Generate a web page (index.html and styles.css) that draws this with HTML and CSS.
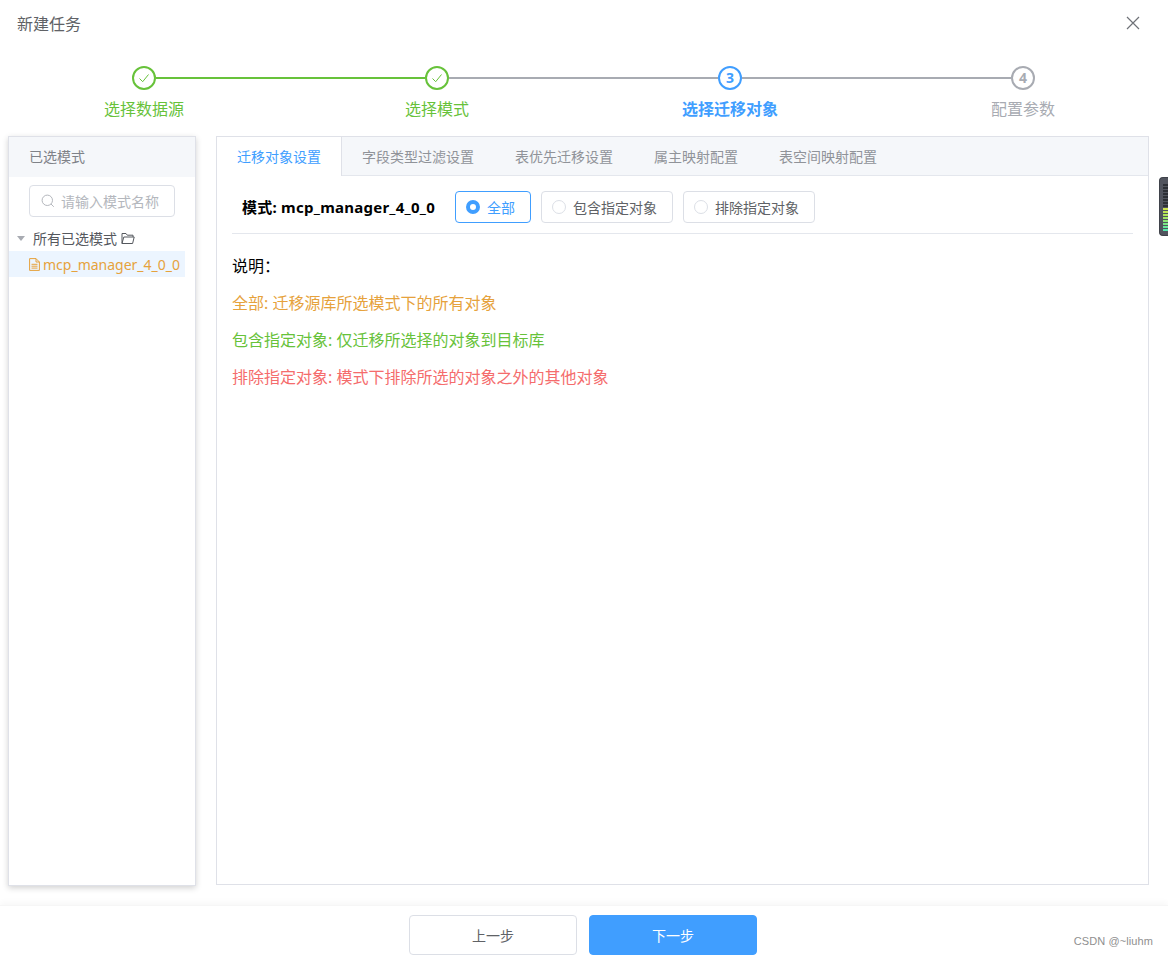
FILE: index.html
```html
<!DOCTYPE html>
<html lang="zh-CN">
<head>
  <meta charset="UTF-8">
  <meta name="viewport" content="width=device-width, initial-scale=1">
  <title>新建任务</title>
  <link rel="stylesheet" href="styles.css">
</head>
<body>
  <div class="dialog">
    <div class="dialog-head">
      <span class="dialog-title">新建任务</span>
      <svg class="close-icon" width="14" height="14" viewBox="0 0 14 14"><path d="M1 1L13 13M13 1L1 13" stroke="#6f7278" stroke-width="1.2" fill="none"/></svg>
    </div>

    <div class="steps">
      <div class="step done line-done">
        <div class="step-icon"><svg width="12" height="12" viewBox="0 0 12 12"><path d="M1.5 6.5L4.7 9.7L10.5 2.5" stroke="#67c23a" stroke-width="1" fill="none"/></svg></div>
        <div class="step-label">选择数据源</div>
      </div>
      <div class="step done">
        <div class="step-icon"><svg width="12" height="12" viewBox="0 0 12 12"><path d="M1.5 6.5L4.7 9.7L10.5 2.5" stroke="#67c23a" stroke-width="1" fill="none"/></svg></div>
        <div class="step-label">选择模式</div>
      </div>
      <div class="step active">
        <div class="step-icon">3</div>
        <div class="step-label">选择迁移对象</div>
      </div>
      <div class="step last">
        <div class="step-icon">4</div>
        <div class="step-label">配置参数</div>
      </div>
    </div>

    <div class="content">
      <div class="side">
        <div class="side-head">已选模式</div>
        <div class="search">
          <svg width="14" height="14" viewBox="0 0 14 14"><circle cx="6.3" cy="6.3" r="5.2" stroke="#b4b7bd" stroke-width="1" fill="none"/><path d="M10 10L12.8 12.8" stroke="#b4b7bd" stroke-width="1"/></svg>
          <span>请输入模式名称</span>
        </div>
        <div class="tree-root">
          <span class="caret"></span>
          <span>所有已选模式</span>
          <svg width="14" height="13" viewBox="0 0 14 13"><path d="M1 11.5V1.5H5L6.3 3.2H12V5M1 11.5H11.6L13.2 5H2.8L1 11.5Z" stroke="#55585e" stroke-width="1" fill="none"/></svg>
        </div>
        <div class="tree-item">
          <svg width="11" height="13" viewBox="0 0 11 13"><path d="M0.6 0.6H7L10.4 4V12.4H0.6ZM7 0.6V4H10.4M2.5 6.3H8.5M2.5 8.2H8.5M2.5 10.1H8.5" stroke="#e6a23c" stroke-width="1" fill="none"/></svg>
          <span>mcp_manager_4_0_0</span>
        </div>
      </div>

      <div class="main">
        <div class="tabs">
          <div class="tab current">迁移对象设置</div>
          <div class="tab">字段类型过滤设置</div>
          <div class="tab">表优先迁移设置</div>
          <div class="tab">属主映射配置</div>
          <div class="tab">表空间映射配置</div>
        </div>
        <div class="main-body">
          <div class="mode-row">
            <span class="mode-name">模式: mcp_manager_4_0_0</span>
            <div class="radio checked"><span class="dot"></span>全部</div>
            <div class="radio"><span class="dot"></span>包含指定对象</div>
            <div class="radio"><span class="dot"></span>排除指定对象</div>
          </div>
          <div class="notes">
            <p>说明：</p>
            <p class="orange">全部: 迁移源库所选模式下的所有对象</p>
            <p class="green">包含指定对象: 仅迁移所选择的对象到目标库</p>
            <p class="red">排除指定对象: 模式下排除所选的对象之外的其他对象</p>
          </div>
        </div>
      </div>
    </div>

    <div class="foot">
      <button class="btn">上一步</button>
      <button class="btn primary">下一步</button>
    </div>
  </div>

  <div class="meter"></div>
  <div class="watermark">CSDN @~liuhm</div>
</body>
</html>
```

FILE: styles.css
```css
* {
  box-sizing: border-box;
}
html, body {
  margin: 0;
  height: 955px;
  overflow: hidden;
}
body {
  font-family: "Noto Sans", "Noto Sans CJK SC", sans-serif;
  background-color: #fff;
  color: #606266;
  position: relative;
}
.dialog {
  height: 955px;
  display: flex;
  flex-direction: column;
}
.dialog-head {
  height: 46px;
  padding: 0 28px 0 17px;
  display: flex;
  align-items: center;
  justify-content: space-between;
}
.dialog-title {
  font-size: 16px;
  color: #606266;
}
.steps {
  display: grid;
  grid-template-columns: repeat(4, 293px);
  width: 1172px;
  margin-left: -2.5px;
  padding-top: 20px;
  height: 90px;
}
.step {
  position: relative;
  text-align: center;
  color: #a8abb2;
}
.step::after {
  content: "";
  position: absolute;
  left: 158.5px;
  width: 269px;
  top: 11px;
  height: 2px;
  background-color: #a8abb2;
}
.step.last::after {
  display: none;
}
.step.line-done::after {
  background-color: #67c23a;
}
.step.done {
  color: #67c23a;
}
.step.active {
  color: #409eff;
}
.step-icon {
  width: 24px;
  height: 24px;
  margin: 0 auto;
  border: 2px solid currentColor;
  border-radius: 50%;
  display: flex;
  align-items: center;
  justify-content: center;
  font-size: 14px;
  font-weight: 700;
  line-height: 1;
}
.step-label {
  margin-top: 7px;
  font-size: 16px;
  line-height: 24px;
}
.step.active .step-label {
  font-weight: 600;
}
.content {
  height: 750px;
  padding-left: 8px;
  display: flex;
  gap: 20px;
}
.side {
  width: 188px;
  height: 750px;
  border: 1px solid #dfe1e8;
  box-shadow: 0 2px 6px rgba(0,0,0,0.18);
  background-color: #fff;
}
.side-head {
  height: 40px;
  padding-left: 20px;
  background-color: #f5f7fa;
  font-size: 14px;
  line-height: 40px;
  color: #7f8288;
}
.search {
  width: 146px;
  height: 32px;
  margin: 8px 0 0 20px;
  padding-left: 11px;
  border: 1px solid #dcdfe6;
  border-radius: 4px;
  display: flex;
  align-items: center;
  gap: 6px;
  font-size: 14px;
  color: #b4b7bd;
}
.tree-root {
  height: 26px;
  margin-top: 8px;
  padding-left: 8px;
  display: flex;
  align-items: center;
  font-size: 14px;
  color: #55585e;
}
.tree-root svg {
  margin-left: 4px;
}
.caret {
  width: 0;
  height: 0;
  margin-right: 8px;
  border-left: 4px solid transparent;
  border-right: 4px solid transparent;
  border-top: 5px solid #a8abb2;
}
.tree-item {
  width: 176px;
  height: 26px;
  padding-left: 20px;
  display: flex;
  align-items: center;
  gap: 3px;
  background-color: #ecf5ff;
  font-size: 14px;
  color: #e6a23c;
  white-space: nowrap;
}
.main {
  width: 933px;
  height: 749px;
  border: 1px solid #dfe1e8;
}
.tabs {
  height: 39px;
  display: flex;
  background-color: #f5f7fa;
  border-bottom: 1px solid #e4e7ed;
}
.tab {
  height: 39px;
  padding: 0 20px;
  margin-right: 1px;
  font-size: 14px;
  line-height: 40px;
  color: #909399;
}
.tab.current {
  height: 39px;
  background-color: #fff;
  color: #409eff;
  border-right: 1px solid #dfe1e8;
  margin-right: 0;
}
.main-body {
  padding: 15px 15px 0;
}
.mode-row {
  height: 43px;
  padding-left: 10px;
  display: flex;
  align-items: flex-start;
  gap: 10px;
  border-bottom: 1px solid #e4e7ed;
}
.mode-name {
  width: 203px;
  font-size: 15px;
  font-weight: 700;
  letter-spacing: 0.25px;
  line-height: 32px;
  color: #000;
  white-space: nowrap;
}
.radio {
  height: 32px;
  padding: 0 15px 0 10px;
  border: 1px solid #dcdfe6;
  border-radius: 4px;
  display: flex;
  align-items: center;
  gap: 7px;
  font-size: 14px;
  color: #606266;
}
.dot {
  width: 14px;
  height: 14px;
  border: 1px solid #dcdfe6;
  border-radius: 50%;
  background-color: #fff;
}
.radio.checked {
  border-color: #409eff;
  color: #409eff;
}
.radio.checked .dot {
  border: 4.5px solid #409eff;
}
.notes {
  padding-top: 20px;
}
.notes p {
  margin: 0 0 13px;
  font-size: 16px;
  line-height: 24px;
  color: #000;
}
.notes p.orange {
  color: #e6a23c;
}
.notes p.green {
  color: #67c23a;
}
.notes p.red {
  color: #f56c6c;
}
.foot {
  height: 50px;
  margin-top: 19px;
  padding: 9px 2px 0 0;
  display: flex;
  justify-content: center;
  gap: 12px;
  box-shadow: 0 -3px 6px rgba(0,0,0,0.03);
  border-top: 1px solid #f6f6f6;
}
.btn {
  width: 168px;
  height: 40px;
  border: 1px solid #dcdfe6;
  border-radius: 4px;
  background-color: #fff;
  font-family: inherit;
  font-size: 14px;
  color: #606266;
}
.btn.primary {
  border-color: #409eff;
  background-color: #409eff;
  color: #fff;
}
.meter {
  position: absolute;
  right: 0;
  top: 177px;
  width: 9px;
  height: 59px;
  border-radius: 4px 0 0 4px;
  background-color: #51545e;
  border: 1px solid #3f424a;
  border-right: 0;
}
.meter::after {
  content: "";
  position: absolute;
  left: 3px;
  right: 0;
  top: 6px;
  height: 47px;
  background: repeating-linear-gradient(to bottom, transparent 0 2px, #51545e 2px 3px),
    linear-gradient(to bottom, #2d3036 0 48%, #d9e24a 48%, #a8e860 70%, #4fe8b0 100%);
}
.watermark {
  position: absolute;
  right: 15px;
  top: 935px;
  font-family: "Liberation Sans", sans-serif;
  font-size: 11px;
  letter-spacing: 0.1px;
  color: #8f8f8f;
}
```
